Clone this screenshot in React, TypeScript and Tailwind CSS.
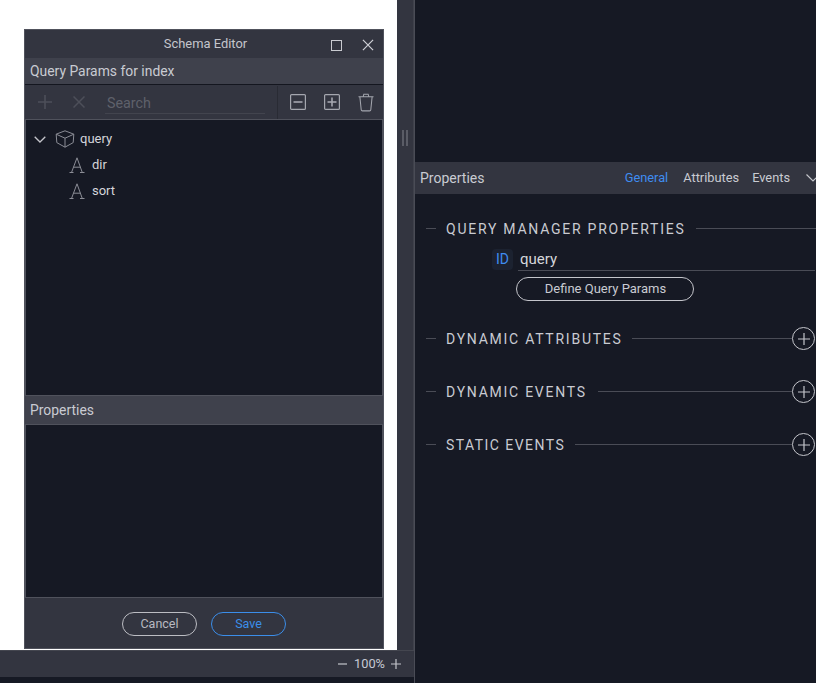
import React from "react";

const font = { fontFamily: "Roboto, sans-serif" };

function Cube() {
  return (
    <svg width="20" height="18" viewBox="0 0 20 18" fill="none" stroke="#8b8d96" strokeWidth="1" className="shrink-0">
      <path d="M10 .8 18.8 4.2 18.2 12.6 10 17.2 1.8 12.6 1.2 4.2Z" />
      <path d="M1.2 4.2 10 8.2 18.8 4.2M10 8.2V17.2" />
    </svg>
  );
}

function LetterA() {
  return (
    <svg width="16" height="16" viewBox="0 0 16 16" fill="none" stroke="#8b8d96" strokeWidth="1" className="shrink-0">
      <path d="M.5 15.5H4.5M11 15.5H15.5M2.5 15.5 8 .8 13.3 15.5M4.5 10.2H11.5" />
    </svg>
  );
}

function BoxIcon({ plus }: { plus?: boolean }) {
  return (
    <svg width="16" height="16" viewBox="0 0 16 16" fill="none" stroke="#a4a6ae" strokeWidth="1.2">
      <rect x=".6" y=".6" width="14.8" height="14.8" rx="1" />
      <path d="M3.5 8H12.5" strokeWidth="1.6" />
      {plus && <path d="M8 3.5V12.5" strokeWidth="1.6" />}
    </svg>
  );
}

function Trash() {
  return (
    <svg width="16" height="19" viewBox="0 0 17 19" fill="none" stroke="#a4a6ae" strokeWidth="1.1">
      <path d="M.5 3.5H16.5M2 3.5 3.4 17.2Q3.5 18.4 4.7 18.4H12.3Q13.5 18.4 13.6 17.2L15 3.5M5.5 3.3 6.2 .7H10.8L11.5 3.3" />
    </svg>
  );
}

function Section({ title, plus, titleClass, lineClass }: { title: string; plus?: boolean; titleClass: string; lineClass: string }) {
  return (
    <div className="flex items-center h-[24px] pl-[11px]">
      <div className="w-[10px] h-px bg-[#4a4c56] mb-[2px]" />
      <div className={`ml-[10px] text-[14px] text-[#c9cbd2] whitespace-nowrap ${titleClass}`}>{title}</div>
      <div className={`flex-1 h-px bg-[#4a4c56] mb-[2px] ${lineClass}`} />
      {plus && (
        <div className="w-[23px] h-[23px] rounded-full border border-[#c4c5cb] flex items-center justify-center shrink-0 mr-px mb-px">
          <svg width="12" height="12" viewBox="0 0 12 12" stroke="#c4c5cb" strokeWidth="1.2">
            <path d="M6 0V12M0 6H12" />
          </svg>
        </div>
      )}
    </div>
  );
}

function TreeRow({ label }: { label: string }) {
  return (
    <div className="flex items-center h-[26px] pl-[43px] gap-[7px] text-[13px] text-[#d4d5da]">
      <LetterA />
      <span>{label}</span>
    </div>
  );
}

export default function App() {
  return (
    <div style={font} className="w-[816px] h-[683px] overflow-hidden flex bg-[#161924] text-[14px]">
      <div className="w-[414px] h-full flex flex-col shrink-0 bg-[#161924]">
        <div className="h-[650px] flex shrink-0">
          <div className="w-[397px] bg-white pl-[24px] pt-[29px] shrink-0">
            <div className="w-[360px] h-[620px] flex flex-col bg-[#333540] border border-[#50525c]">
              <div className="h-[28px] flex items-center relative shrink-0">
                <span className="w-full text-center text-[12.9px] text-[#c5c6cc] pl-[3px]">Schema Editor</span>
                <div className="absolute left-[306px] top-[10px] w-[11px] h-[11px] border border-[#c9cad0]" />
                <svg className="absolute left-[337px] top-[9px]" width="12" height="12" viewBox="0 0 13 13" stroke="#d0d1d6" strokeWidth="1.3">
                  <path d="M1 1 12 12M12 1 1 12" />
                </svg>
              </div>
              <div className="h-[27px] shrink-0 bg-[#3f414c] flex items-center pl-[5px] text-[13.9px] text-[#c9cbd2] border-b border-[#14161f]">
                Query Params for index
              </div>
              <div className="h-[34px] shrink-0 flex items-center">
                <svg className="ml-[13px]" width="14" height="14" viewBox="0 0 14 14" stroke="#4d4f59" strokeWidth="1.6">
                  <path d="M7 0V14M0 7H14" />
                </svg>
                <svg className="ml-[21px]" width="12" height="12" viewBox="0 0 12 12" stroke="#4d4f59" strokeWidth="1.5">
                  <path d="M.5 .5 11.5 11.5M11.5 .5 .5 11.5" />
                </svg>
                <div className="ml-[20px] w-[160px] h-[24px] border-b border-[#42444e] pl-[2px] text-[14.3px] text-[#5f616b] leading-[27px]">Search</div>
                <div className="ml-[12px] w-px h-[33px] bg-[#292b34]" />
                <div className="ml-[12px] flex"><BoxIcon /></div>
                <div className="ml-[18px] flex"><BoxIcon plus /></div>
                <div className="ml-[18px] flex"><Trash /></div>
              </div>
              <div className="h-[277px] shrink-0 bg-[#161924] border border-[#50525c] pt-[6px]">
                <div className="flex items-center h-[26px] pl-[8px] text-[13px] text-[#d4d5da]">
                  <svg width="12" height="7" viewBox="0 0 12 7" fill="none" stroke="#c4c5cb" strokeWidth="1.3">
                    <path d="M.7 .7 6 6 11.3 .7" />
                  </svg>
                  <span className="ml-[9px] flex"><Cube /></span>
                  <span className="ml-[5px]">query</span>
                </div>
                <TreeRow label="dir" />
                <TreeRow label="sort" />
              </div>
              <div className="h-[28px] shrink-0 bg-[#3f414c] flex items-center pl-[5px] text-[13.9px] text-[#c9cbd2]">Properties</div>
              <div className="h-[174px] shrink-0 bg-[#161924] border border-[#50525c]" />
              <div className="flex-1 flex items-start justify-center gap-[14px] pt-[14px]">
                <button className="w-[75px] h-[24px] rounded-full border border-[#bcbdc3] text-[12.5px] text-[#b9bac1] pt-px">Cancel</button>
                <button className="w-[75px] h-[24px] rounded-full border border-[#3b8eea] text-[12.5px] text-[#3b8eea] pt-px">Save</button>
              </div>
            </div>
          </div>
          <div className="flex-1 bg-[#333540] border-r border-[#3f414b] flex justify-center gap-[2px] pt-[130px]">
            <div className="w-[2px] h-[16px] bg-[#5a5c66]" />
            <div className="w-[2px] h-[16px] bg-[#5a5c66]" />
          </div>
        </div>
        <div className="h-[27px] shrink-0 bg-[#333540] border-t border-[#44464f] flex items-center justify-end pr-[13px] text-[12.8px] text-[#c5c9d4]">
          <svg width="9" height="2" viewBox="0 0 9 2" stroke="#c4c5cb" strokeWidth="1.2"><path d="M0 1H9" /></svg>
          <span className="ml-[7px] mr-[6px]">100%</span>
          <svg width="10" height="10" viewBox="0 0 10 10" stroke="#c4c5cb" strokeWidth="1.2"><path d="M5 0V10M0 5H10" /></svg>
        </div>
      </div>
      <div className="w-px shrink-0 bg-[#4a4c56]" />
      <div className="flex-1 min-w-0 flex flex-col">
        <div className="h-[162px] shrink-0" />
        <div className="h-[32px] shrink-0 bg-[#333540] flex items-center pl-[5px] text-[12.8px] text-[#c9cbd2] overflow-hidden">
          <span className="text-[14px]">Properties</span>
          <span className="text-[#3f8cf0] ml-auto">General</span>
          <span className="ml-[15px]">Attributes</span>
          <span className="ml-[13px]">Events</span>
          <svg className="ml-[16px] mr-[-4px] shrink-0" width="14" height="8" viewBox="0 0 14 8" fill="none" stroke="#c4c5cb" strokeWidth="1.2">
            <path d="M.5 .5 7 7 13.5 .5" />
          </svg>
        </div>
        <div className="pt-[23px]">
          <Section title="QUERY MANAGER PROPERTIES" titleClass="tracking-[1.75px]" lineClass="ml-[11px]" />
          <div className="flex items-center h-[24px] ml-[77px] mt-[6px]">
            <div className="w-[21px] h-[21px] bg-[#1c2230] text-[14px] text-[#3f8cf0] flex items-center justify-center rounded-sm">ID</div>
            <div className="ml-[5px] flex-1 mr-px h-[24px] border-b border-[#4a4c56] text-[15px] leading-[24px] text-[#d4d5da] pl-[2px]">query</div>
          </div>
          <div className="ml-[101px] mt-[6px] w-[178px] h-[24px] rounded-full border border-[#c4c5cb] text-[13px] text-[#c9cbd2] flex items-center justify-center pl-px">Define Query Params</div>
          <div className="mt-[26px]"><Section title="DYNAMIC ATTRIBUTES" plus titleClass="tracking-[1.75px]" lineClass="ml-[9px]" /></div>
          <div className="mt-[29px]"><Section title="DYNAMIC EVENTS" plus titleClass="tracking-[1.75px]" lineClass="ml-[11px]" /></div>
          <div className="mt-[29px]"><Section title="STATIC EVENTS" plus titleClass="tracking-[1.45px]" lineClass="ml-[10px]" /></div>
        </div>
      </div>
    </div>
  );
}
